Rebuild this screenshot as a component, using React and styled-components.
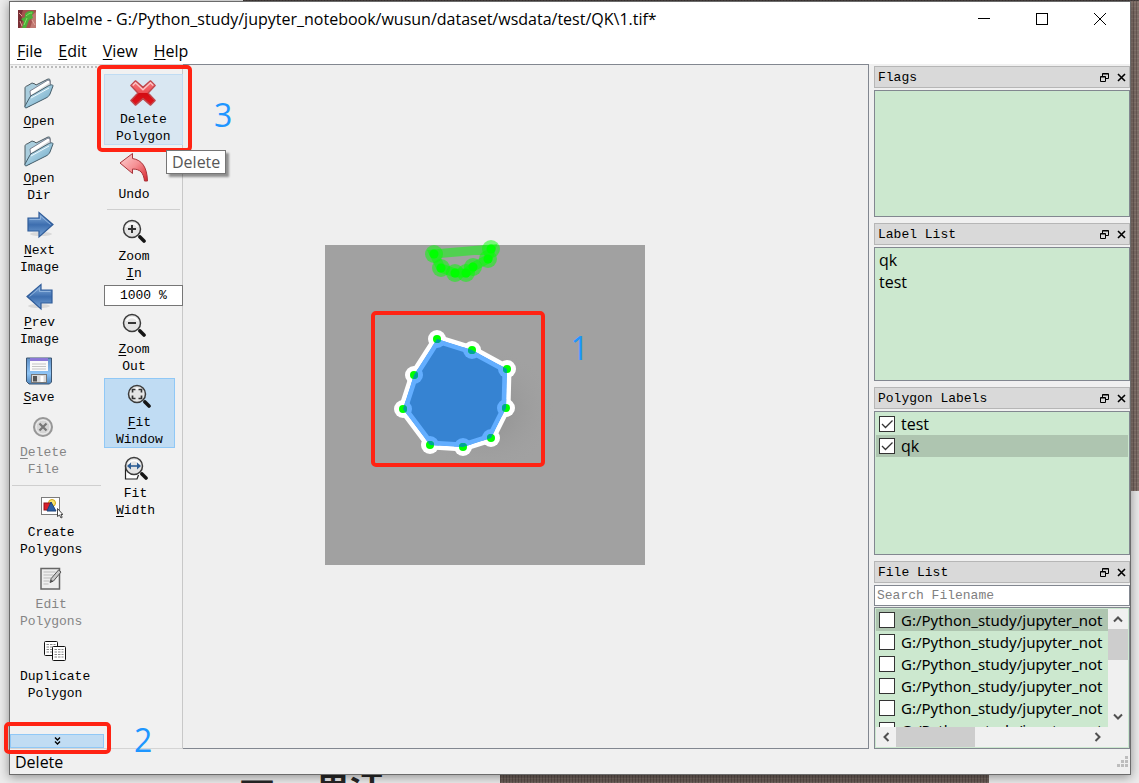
import {useState} from 'react';
import styled, {createGlobalStyle} from 'styled-components';

const GlobalStyle = createGlobalStyle`
  * {
    box-sizing: border-box;
  }

  body {
    margin: 0;
    font-family: 'Open Sans', 'Noto Sans', sans-serif;
    font-size: 16px;
    color: #000;
  }

  button,
  input {
    font: inherit;
    color: inherit;
    margin: 0;
    padding: 0;
    border: 0;
    background: none;
  }

  ul {
    margin: 0;
    padding: 0;
    list-style: none;
  }

  svg {
    display: block;
    flex: none;
  }
`;

const mono = `'Liberation Mono', monospace`;

const Desktop = styled.div`
  position: relative;
  min-height: 100vh;
  padding: 1px 8px 8px 9px;
  display: flex;
  overflow: hidden;
  background: #ececec;
`;

const Wallpaper = styled.div`
  position: absolute;
  background-color: #6a5d57;
  background-image: repeating-linear-gradient(
      90deg,
      rgba(30, 20, 20, 0.25) 0 1px,
      transparent 1px 3px
    ),
    repeating-linear-gradient(
      0deg,
      rgba(255, 240, 230, 0.08) 0 1px,
      transparent 1px 4px
    );
`;

const RightWallpaper = styled(Wallpaper)`
  top: 0;
  right: 0;
  width: 9px;
  height: 491px;
  background-color: #82716a;
`;

const BottomWallpaper = styled(Wallpaper)`
  left: 500px;
  right: 150px;
  bottom: 0;
  height: 9px;
`;

const TopWallpaper = styled(Wallpaper)`
  top: 0;
  left: 243px;
  right: 0;
  height: 1px;
  background-color: #3c3534;
`;

const PageHeading = styled.div`
  position: absolute;
  left: 240px;
  bottom: -16px;
  font: bold 34px/34px 'Noto Sans CJK SC', sans-serif;
  color: #262626;
  white-space: pre;
`;

const Window = styled.main`
  position: relative;
  flex: 1;
  min-width: 0;
  display: flex;
  flex-direction: column;
  border: 1px solid #6b6b6b;
  background: #f0f0f0;
  box-shadow: 0 2px 10px rgba(0, 0, 0, 0.4);
`;

const TitleBar = styled.header`
  height: 36px;
  padding: 0 1px 2px 8px;
  display: flex;
  align-items: center;
  background: #fff;
`;

const Title = styled.h1`
  flex: 1;
  margin: 0 0 0 7px;
  font-size: 16px;
  font-weight: 400;
  white-space: nowrap;
  overflow: hidden;
`;

const WindowButton = styled.button`
  width: 58px;
  height: 34px;
  display: grid;
  place-items: center;
`;

const MenuBar = styled.nav`
  height: 26px;
  padding-left: 7px;
  display: flex;
  align-items: center;
  gap: 16px;
  background: #fff;
`;

const Key = styled.span`
  text-decoration: underline;
  text-underline-offset: 2px;
  text-decoration-thickness: 1px;
`;

const Main = styled.div`
  flex: 1;
  display: flex;
  min-height: 0;
`;

const Toolbar = styled.aside`
  width: 173px;
  flex: none;
  display: flex;
  flex-direction: column;
  border-right: 1px solid #c8c8c8;
  border-top: 1px solid #d4d4d4;
  border-bottom: 1px solid #d4d4d4;
  background: #f1f1f1;
`;

const Grip = styled.div`
  height: 2px;
  margin: 1px 0 6px 1px;
  background: repeating-linear-gradient(90deg, #bcbcbc 0 2px, #f6f6f6 2px 4px);
`;

const ToolColumns = styled.div`
  flex: 1;
  display: grid;
  grid-template-columns: 94px 1fr;
`;

const ToolColumn = styled.div`
  display: flex;
  flex-direction: column;
  align-items: flex-start;
  gap: ${(props) => props.$gap}px;
`;

const ToolButton = styled.button`
  min-width: ${(props) => (props.$wide ? 60 : 50)}px;
  margin-left: ${(props) => (props.$wide ? 0 : 4)}px;
  padding: 0 ${(props) => (props.$wide ? 12 : 6)}px;
  font: 13px/17px ${mono};
  text-align: center;
  white-space: nowrap;
  color: ${(props) => (props.disabled ? '#858585' : '#000')};
  background: ${(props) => props.$fill || 'transparent'};
  outline: ${(props) => (props.$line ? `1px solid ${props.$line}` : 'none')};
  outline-offset: -1px;
`;

const IconSlot = styled.span`
  height: ${(props) => props.$height}px;
  display: flex;
  align-items: center;
  justify-content: center;
`;

const TextLine = styled.span`
  display: block;
`;

const Separator = styled.hr`
  width: ${(props) => (props.$wide ? 73 : 89)}px;
  height: 1px;
  margin: 3px 0 0 ${(props) => (props.$wide ? 3 : 2)}px;
  border: 0;
  background: #cfcfcf;
`;

const ZoomInput = styled.input`
  width: 100%;
  height: 21px;
  border: 1px solid #767676;
  background: #fff;
  text-align: center;
  font: 13px/17px ${mono};
`;

const MoreButton = styled.button`
  width: 94px;
  height: 14px;
  margin-top: auto;
  display: grid;
  place-items: center;
  border: 1px solid #90c8f6;
  background: #c0dcf3;
`;

const Canvas = styled.section`
  flex: 1;
  min-width: 0;
  padding: 0 82px 4px 0;
  display: flex;
  align-items: center;
  justify-content: center;
  border: 1px solid #828790;
  border-left: 0;
  background: #efefef;
`;

const Stage = styled.div`
  position: relative;
  width: 320px;
  height: 320px;
`;

const Docks = styled.aside`
  width: 261px;
  flex: none;
  padding: 2px 0 0 5px;
  display: flex;
  flex-direction: column;
  gap: 6px;
`;

const Dock = styled.section`
  flex: ${(props) => props.$grow} 1 0;
  min-height: 0;
  display: flex;
  flex-direction: column;
`;

const DockHeader = styled.header`
  height: 22px;
  margin-bottom: 2px;
  padding: 0 3px;
  display: flex;
  align-items: center;
  gap: 8px;
  border: 1px solid #b6b6b6;
  background: #d9d9d9;
`;

const DockTitle = styled.h2`
  flex: 1;
  margin: 0;
  font: 400 13px/17px ${mono};
`;

const DockBody = styled.div`
  flex: 1;
  min-height: 0;
  padding: 1px;
  border: 1px solid #828790;
  background: #cce8cf;
  overflow: hidden;
`;

const Item = styled.li`
  height: 22px;
  padding-left: 3px;
  line-height: 22px;
  white-space: nowrap;
  background: ${(props) => (props.$selected ? '#aec5b0' : 'transparent')};
`;

const CheckLabel = styled.label`
  display: flex;
  align-items: center;
  gap: 6px;
`;

const CheckBox = styled.input`
  appearance: none;
  width: 16px;
  height: 16px;
  flex: none;
  border: 1px solid #333;
  background: #fff;

  &:checked {
    background: #fff
      url("data:image/svg+xml,%3Csvg xmlns='http://www.w3.org/2000/svg' viewBox='0 0 14 14'%3E%3Cpath d='M2 7l3.5 3.5L12.5 3.5' fill='none' stroke='%23333' stroke-width='1.3'/%3E%3C/svg%3E");
  }
`;

const Search = styled.input`
  height: 21px;
  margin-bottom: 1px;
  padding-left: 2px;
  border: 1px solid #828790;
  background: #fff;
  font: 13px/17px ${mono};

  &::placeholder {
    color: #808080;
    opacity: 1;
  }
`;

const FileBody = styled(DockBody)`
  display: grid;
  grid-template: minmax(0, 1fr) 20px / minmax(0, 1fr) 20px;
`;

const FileItems = styled.ul`
  min-height: 0;
  overflow: hidden;
  font-family: 'Noto Sans', sans-serif;
  font-size: 15px;
`;

const ScrollBar = styled.div`
  display: flex;
  flex-direction: ${(props) => (props.$vertical ? 'column' : 'row')};
  background: #f0f0f0;
`;

const ScrollButton = styled.button`
  width: 20px;
  height: 20px;
  display: grid;
  place-items: center;
`;

const Track = styled.div`
  flex: 1;
  display: flex;
  flex-direction: ${(props) => (props.$vertical ? 'column' : 'row')};
`;

const Thumb = styled.div`
  flex: 0 0 ${(props) => props.$size};
  background: #cdcdcd;
`;

const Corner = styled.div`
  background: #f0f0f0;
`;

const StatusBar = styled.footer`
  height: 25px;
  padding: 0 2px 0 5px;
  display: flex;
  align-items: center;
  justify-content: space-between;
`;

const Tooltip = styled.div`
  position: absolute;
  left: 156px;
  top: 148px;
  padding: 0 5px;
  border: 1px solid #767676;
  background: #fff;
  box-shadow: 3px 3px 2px rgba(0, 0, 0, 0.4);
  line-height: 22px;
  color: #575757;
`;

const Mark = styled.div`
  position: absolute;
  border: 4px solid #ff2313;
  border-radius: 5px;
  pointer-events: none;
`;

const ToolMark = styled(Mark)`
  left: 87px;
  top: 63px;
  width: 95px;
  height: 87px;
`;

const MoreMark = styled(Mark)`
  left: -6px;
  bottom: 20px;
  width: 107px;
  height: 32px;
`;

const ShapeMark = styled(Mark)`
  left: 46px;
  top: 66px;
  width: 174px;
  height: 156px;
`;

const Digit = styled.span`
  position: absolute;
  font: 32px/32px 'Open Sans', sans-serif;
  color: #1e96ff;
`;

const ToolDigit = styled(Digit)`
  left: 204px;
  top: 97px;
`;

const MoreDigit = styled(Digit)`
  left: 124px;
  bottom: 18px;
`;

const ShapeDigit = styled(Digit)`
  left: 246px;
  top: 87px;
`;

const AppIcon = () => (
  <svg width="18" height="18" viewBox="0 0 18 18">
    <rect width="18" height="18" fill="#a5524f" />
    <path d="M0 0h5L3 6l2 4-3 8H0z" fill="#7a2f35" />
    <path d="M13 6l5-4v16h-6l2-6z" fill="#c07a72" />
    <path d="M1 3l3 3M14 10l3 5M2 11l2 5" stroke="#e2a59c" />
    <path
      d="M7 4c2-3 6-4 9-2l-2 3 1 3-4 2-3 8H4l2-6-3-3 4-2z"
      fill="#4caf3a"
    />
    <path d="M8 6c2-2 4-3 6-3M6 15l3-7" stroke="#8be065" fill="none" />
  </svg>
);

const FolderIcon = () => (
  <svg width="32" height="32" viewBox="0 0 32 32">
    <defs>
      <linearGradient id="folder" x1="0" y1="0" x2="1" y2="1">
        <stop offset="0" stopColor="#d3ebf5" />
        <stop offset="0.6" stopColor="#8fbfd6" />
        <stop offset="1" stopColor="#5a93b1" />
      </linearGradient>
    </defs>
    <path
      d="M2 29V10c0-1 1-2 2-2l5-3 3 1 1 1L25 1c1 0 2 0 2 1v6L7 28z"
      fill="#a9cddd"
      stroke="#4d5a61"
    />
    <path d="M7 13L25 2l2 1v8L8 22z" fill="#fff" stroke="#667" strokeWidth="0.8" />
    <path d="M8 17L26 5l1 6L9 20z" fill="#d8dadd" />
    <path
      d="M3 30c-1 0-1-1-1-2l5-9c1-2 3-2 6-4l12-7c2-1 5-2 5 0l-3 8c-1 2-2 3-4 4z"
      fill="url(#folder)"
      stroke="#455e6b"
    />
    <path d="M8 20l18-10" stroke="#effaff" />
  </svg>
);

const BlueArrowIcon = ({left}) => (
  <svg width="30" height="30" viewBox="0 0 30 30">
    <defs>
      <linearGradient id="blueArrow" x1="0" y1="0" x2="0" y2="1">
        <stop offset="0" stopColor="#8db4e0" />
        <stop offset="0.5" stopColor="#3d6eaf" />
        <stop offset="1" stopColor="#7aa6d8" />
      </linearGradient>
    </defs>
    <g transform={left ? 'matrix(-1 0 0 1 30 0)' : undefined}>
      <ellipse cx="16" cy="24" rx="11" ry="2" fill="#d9d9d9" />
      <path
        d="M3 8h11V2.500L28 14.500 14 27v-6H3z"
        fill="url(#blueArrow)"
        stroke="#2f5c99"
        strokeWidth="1.2"
      />
      <path d="M4.500 9.500h11V6l10 8.500" fill="none" stroke="#8fb3dd" />
    </g>
  </svg>
);

const SaveIcon = () => (
  <svg width="28" height="28" viewBox="0 0 28 28">
    <defs>
      <linearGradient id="disk" x1="0" y1="0" x2="0" y2="1">
        <stop offset="0" stopColor="#5f8fc6" />
        <stop offset="0.6" stopColor="#8ec4f5" />
        <stop offset="1" stopColor="#4f86bd" />
      </linearGradient>
    </defs>
    <path
      d="M1.500 1h25v24l-2 2H4l-2.500-2.500z"
      fill="url(#disk)"
      stroke="#3d5570"
    />
    <rect x="5" y="2" width="18" height="12" fill="#fafafa" />
    <rect x="5" y="1" width="18" height="3" fill="#8b78d6" />
    <path d="M7 7h14M7 9.500h14M7 12h14" stroke="#c4c4c4" />
    <rect x="6.500" y="17.500" width="15" height="8" fill="#d9d9d9" stroke="#777" />
    <rect x="8" y="19" width="4" height="5.500" fill="#555" />
    <path d="M17 19v6" stroke="#fff" strokeWidth="3" />
  </svg>
);

const DeleteFileIcon = () => (
  <svg width="22" height="22" viewBox="0 0 22 22">
    <circle cx="11" cy="11" r="9" fill="#d5d5d5" stroke="#979797" strokeWidth="2" />
    <circle cx="11" cy="11" r="7" fill="none" stroke="#f0f0f0" />
    <path d="M7.500 7.500l7 7M14.500 7.500l-7 7" stroke="#777" strokeWidth="2.200" />
  </svg>
);

const CreateIcon = () => (
  <svg width="24" height="24" viewBox="0 0 24 24">
    <rect
      x="2.500"
      y="2.500"
      width="18"
      height="17"
      fill="#fff"
      stroke="#000"
      strokeDasharray="1 1"
    />
    <circle cx="13" cy="8" r="3.500" fill="#f8e36b" stroke="#d1a71a" />
    <rect x="5" y="8" width="7" height="7" fill="#d81e2a" stroke="#941019" />
    <path d="M12 7l5 9H8z" fill="#2b5fa6" stroke="#1d4379" />
    <path
      d="M18.500 13.500v8l2-1.500 1.500 3 1.200-.7-1.300-2.800h2z"
      fill="#fff"
      stroke="#333"
      strokeWidth="0.9"
    />
  </svg>
);

const EditIcon = () => (
  <svg width="22" height="24" viewBox="0 0 22 24">
    <path d="M1 1.500h18.500v20.500H1z" fill="#eee" stroke="#666" strokeWidth="1.500" />
    <path d="M3.500 5h12M3.500 8h10M3.500 11h8M3.500 14h6M3.500 17h5" stroke="#bbb" />
    <path
      d="M10 15.500l1.200-4L18.500 3l2.500 2-7.500 9z"
      fill="#c9c9c9"
      stroke="#555"
    />
    <path d="M10 15.500l3-1.300-1.300-1.500z" fill="#444" />
  </svg>
);

const DuplicateIcon = () => (
  <svg width="24" height="22" viewBox="0 0 24 22">
    <rect x="1.500" y="1.500" width="13" height="14" rx="1" fill="#fff" stroke="#111" />
    <path
      d="M3.500 4.500h9M3.500 7h9M3.500 9.500h9M3.500 12h9"
      stroke="#888"
      strokeDasharray="2.500 1"
    />
    <rect x="9.500" y="6.500" width="13" height="14" rx="1" fill="#fff" stroke="#111" />
    <path
      d="M11.500 9.500h9M11.500 12h9M11.500 14.500h9M11.500 17h9"
      stroke="#888"
      strokeDasharray="2.500 1"
    />
  </svg>
);

const CrossIcon = () => (
  <svg width="28" height="28" viewBox="0 0 30 30">
    <defs>
      <linearGradient id="cross" x1="0" y1="0" x2="0" y2="1">
        <stop offset="0" stopColor="#f6797c" />
        <stop offset="0.48" stopColor="#ee5055" />
        <stop offset="0.52" stopColor="#d30b12" />
        <stop offset="1" stopColor="#e0161d" />
      </linearGradient>
    </defs>
    <path
      d="M7 2l8 7 8-7 5 5-7.500 8 7.500 8-5 5-8-7-8 7-5-5 7.500-8L2 7z"
      fill="url(#cross)"
      stroke="#c0484d"
      strokeWidth="1.500"
      strokeLinejoin="round"
    />
    <path
      d="M4 7l3-3 8 7.500L23 4l3 3"
      fill="none"
      stroke="#fcc4c5"
      strokeWidth="1.500"
    />
  </svg>
);

const UndoIcon = () => (
  <svg width="30" height="30" viewBox="0 0 30 30">
    <defs>
      <linearGradient id="undo" x1="0" y1="0" x2="1" y2="1">
        <stop offset="0" stopColor="#ffd3d3" />
        <stop offset="0.5" stopColor="#f59094" />
        <stop offset="1" stopColor="#d9232b" />
      </linearGradient>
    </defs>
    <path
      d="M1 11L13.500 1.500v5C23 8 28 15 28.500 29h-3c-1-8-4-12-12-12v4.500z"
      fill="url(#undo)"
      stroke="#a8343a"
    />
  </svg>
);

const MagnifierIcon = ({kind}) => (
  <svg width="24" height="24" viewBox="0 0 24 24">
    {kind === 'width' && (
      <path d="M1.500 9v14H13l1.500-4" fill="#fff" stroke="#222" strokeWidth="1.200" />
    )}
    <path d="M16.500 16.500l2 2" stroke="#777" strokeWidth="2" />
    <path
      d="M18 18l4 4"
      stroke="#151515"
      strokeWidth="3.600"
      strokeLinecap="round"
    />
    <circle cx="10" cy="10" r="8.500" fill="#e4e4e4" stroke="#3b3b3b" strokeWidth="1.500" />
    <path d="M4.500 8a6 6 0 0 1 11 0" fill="none" stroke="#fff" strokeWidth="1.500" />
    {kind === 'in' && (
      <path d="M10 6v8M6 10h8" stroke="#333" strokeWidth="2" />
    )}
    {kind === 'out' && <path d="M6 10h8" stroke="#333" strokeWidth="2" />}
    {kind === 'window' && (
      <path
        d="M5.500 8.500v-3h3M11.500 5.500h3v3M14.500 11.500v3h-3M8.500 14.500h-3v-3"
        fill="none"
        stroke="#333"
        strokeWidth="1.700"
      />
    )}
    {kind === 'width' && (
      <g fill="#2f5f96">
        <path d="M3 10l4-3.500v7zM17 10l-4-3.500v7z" />
        <path d="M6 9.200h8v1.600H6z" />
      </g>
    )}
  </svg>
);

const ChevronIcon = ({turn = 0}) => (
  <svg width="12" height="12" viewBox="0 0 12 12">
    <path
      d="M2 8.500l4-4 4 4"
      fill="none"
      stroke="#505050"
      strokeWidth="2"
      transform={`rotate(${turn} 6 6)`}
    />
  </svg>
);

const FloatIcon = () => (
  <svg width="9" height="9" viewBox="0 0 9 9" fill="none" stroke="#000">
    <path d="M2.500 3V.5h6v5H6M2.500 1h6" />
    <path d="M.5 3.500h5v5h-5zM.5 4h5" />
  </svg>
);

const CloseIcon = () => (
  <svg width="9" height="9" viewBox="0 0 9 9">
    <path d="M1 1l7 7M8 1L1 8" stroke="#000" strokeWidth="1.600" />
  </svg>
);

const greenPoints = [
  [109, 9],
  [116, 23],
  [130, 28],
  [141, 28],
  [148, 22],
  [163, 14],
  [166, 4],
];

const shapePoints = [
  [112, 94],
  [147, 105],
  [182, 124],
  [181, 163],
  [166, 193],
  [138, 202],
  [105, 200],
  [78, 164],
  [89, 130],
];

const toPoints = (list) => list.map((p) => p.join(',')).join(' ');

const Drawing = () => (
  <svg width="320" height="320" viewBox="0 0 320 320" overflow="visible">
    <defs>
      <clipPath id="inside">
        <polygon points={toPoints(shapePoints)} />
      </clipPath>
      <radialGradient id="shade">
        <stop offset="0" stopColor="#8c8c8c" />
        <stop offset="1" stopColor="#a0a0a0" stopOpacity="0" />
      </radialGradient>
    </defs>
    <rect width="320" height="320" fill="#a1a1a1" />
    <ellipse cx="160" cy="165" rx="70" ry="62" fill="url(#shade)" />

    <polygon
      points={toPoints(greenPoints)}
      fill="none"
      stroke="#00ff00"
      strokeOpacity="0.5"
      strokeWidth="9"
    />
    {greenPoints.map(([x, y]) => (
      <g key={`${x}-${y}`} fill="#00ff00">
        <circle cx={x} cy={y} r="9" fillOpacity="0.5" />
        <circle cx={x} cy={y} r="4.500" />
      </g>
    ))}

    <polygon
      points={toPoints(shapePoints)}
      fill="#3a86d4"
      stroke="#fff"
      strokeWidth="9"
    />
    {shapePoints.map(([x, y]) => (
      <circle key={`halo-${x}`} cx={x} cy={y} r="9" fill="#fff" />
    ))}
    <g clipPath="url(#inside)">
      <polygon
        points={toPoints(shapePoints)}
        fill="#3683d2"
        stroke="#63aeff"
        strokeWidth="9"
      />
      {shapePoints.map(([x, y]) => (
        <circle key={`inner-${x}`} cx={x} cy={y} r="9" fill="#63aeff" />
      ))}
    </g>
    {shapePoints.map(([x, y]) => (
      <circle key={`dot-${x}`} cx={x} cy={y} r="4" fill="#00ff00" />
    ))}
    <g clipPath="url(#inside)">
      {shapePoints.map(([x, y]) => (
        <circle key={`in-${x}`} cx={x} cy={y} r="4" fill="#00a19b" />
      ))}
    </g>
  </svg>
);

// "_" in front of a letter marks it as the keyboard mnemonic
const Mnemonic = ({text}) => {
  const at = text.indexOf('_');
  if (at < 0) return text;
  return (
    <>
      {text.slice(0, at)}
      <Key>{text[at + 1]}</Key>
      {text.slice(at + 2)}
    </>
  );
};

const Tool = ({icon, lines, slot = 34, ...rest}) => (
  <ToolButton type="button" {...rest}>
    <IconSlot $height={slot}>{icon}</IconSlot>
    {lines.map((line) => (
      <TextLine key={line}>
        <Mnemonic text={line} />
      </TextLine>
    ))}
  </ToolButton>
);

const DockPanel = ({title, grow, children}) => (
  <Dock $grow={grow}>
    <DockHeader>
      <DockTitle>{title}</DockTitle>
      <button type="button" aria-label={`Float ${title}`}>
        <FloatIcon />
      </button>
      <button type="button" aria-label={`Close ${title}`}>
        <CloseIcon />
      </button>
    </DockHeader>
    {children}
  </Dock>
);

const menus = ['_File', '_Edit', '_View', '_Help'];
const labels = ['qk', 'test'];
const polygons = ['test', 'qk'];
const files = [0, 1, 2, 3, 4, 5];

const App = () => {
  const [zoom, setZoom] = useState('1000 %');

  return (
    <Desktop>
      <GlobalStyle />
      <RightWallpaper />
      <BottomWallpaper />
      <TopWallpaper />
      <PageHeading>一、 里注</PageHeading>
      <Window>
        <TitleBar>
          <AppIcon />
          <Title>
            labelme - G:/Python_study/jupyter_notebook/wusun/dataset/wsdata/test/QK\1.tif*
          </Title>
          <WindowButton type="button" aria-label="Minimize">
            <svg width="12" height="12">
              <path d="M0 5.500h12" stroke="#000" />
            </svg>
          </WindowButton>
          <WindowButton type="button" aria-label="Maximize">
            <svg width="12" height="12">
              <rect x=".5" y=".5" width="11" height="11" fill="none" stroke="#000" />
            </svg>
          </WindowButton>
          <WindowButton type="button" aria-label="Close">
            <svg width="12" height="12">
              <path d="M0 0l12 12M12 0L0 12" stroke="#000" />
            </svg>
          </WindowButton>
        </TitleBar>
        <MenuBar>
          {menus.map((menu) => (
            <button type="button" key={menu}>
              <Mnemonic text={menu} />
            </button>
          ))}
        </MenuBar>

        <Main>
          <Toolbar>
            <Grip />
            <ToolColumns>
              <ToolColumn $gap={4}>
                <Tool icon={<FolderIcon />} lines={['_Open']} slot={39} />
                <Tool icon={<FolderIcon />} lines={['_Open', 'Dir']} slot={36} />
                <Tool icon={<BlueArrowIcon />} lines={['_Next', 'Image']} />
                <Tool icon={<BlueArrowIcon left />} lines={['_Prev', 'Image']} />
                <Tool icon={<SaveIcon />} lines={['_Save']} slot={37} />
                <Tool icon={<DeleteFileIcon />} lines={['_Delete', 'File']} disabled />
                <Separator />
                <Tool icon={<CreateIcon />} lines={['Create', 'Polygons']} />
                <Tool icon={<EditIcon />} lines={['Edit', 'Polygons']} disabled />
                <Tool icon={<DuplicateIcon />} lines={['Duplicate', 'Polygon']} />
                <MoreButton type="button" aria-label="More tools">
                  <svg width="7" height="8" viewBox="0 0 7 8">
                    <path
                      d="M1 .5L3.500 3 6 .5M1 4.500L3.500 7 6 4.500"
                      fill="none"
                      stroke="#000"
                      strokeWidth="1.400"
                    />
                  </svg>
                </MoreButton>
              </ToolColumn>
              <ToolColumn $gap={3}>
                <Tool
                  $wide
                  $fill="#d9e7f2"
                  $line="#c0dcf3"
                  icon={<CrossIcon />}
                  lines={['Delete', 'Polygon']}
                  slot={37}
                />
                <Tool $wide icon={<UndoIcon />} lines={['Undo']} slot={38} />
                <Separator $wide />
                <Tool
                  $wide
                  icon={<MagnifierIcon kind="in" />}
                  lines={['Zoom', '_In']}
                  slot={35}
                />
                <ZoomInput
                  aria-label="Zoom level"
                  value={zoom}
                  onChange={(e) => setZoom(e.target.value)}
                />
                <Tool
                  $wide
                  icon={<MagnifierIcon kind="out" />}
                  lines={['_Zoom', 'Out']}
                  slot={32}
                />
                <Tool
                  $wide
                  $fill="#c0dcf3"
                  $line="#90c8f6"
                  icon={<MagnifierIcon kind="window" />}
                  lines={['_Fit', 'Window']}
                  slot={36}
                />
                <Tool
                  $wide
                  icon={<MagnifierIcon kind="width" />}
                  lines={['Fit', '_Width']}
                />
              </ToolColumn>
            </ToolColumns>
          </Toolbar>

          <Canvas>
            <Stage>
              <Drawing />
              <ShapeMark />
              <ShapeDigit>1</ShapeDigit>
            </Stage>
          </Canvas>

          <Docks>
            <DockPanel title="Flags" grow={151}>
              <DockBody />
            </DockPanel>
            <DockPanel title="Label List" grow={158}>
              <DockBody>
                <ul>
                  {labels.map((label) => (
                    <Item key={label}>{label}</Item>
                  ))}
                </ul>
              </DockBody>
            </DockPanel>
            <DockPanel title="Polygon Labels" grow={168}>
              <DockBody>
                <ul>
                  {polygons.map((label) => (
                    <Item key={label} $selected={label === 'qk'}>
                      <CheckLabel>
                        <CheckBox type="checkbox" defaultChecked />
                        {label}
                      </CheckLabel>
                    </Item>
                  ))}
                </ul>
              </DockBody>
            </DockPanel>
            <DockPanel title="File List" grow={188}>
              <Search placeholder="Search Filename" aria-label="Search Filename" />
              <FileBody>
                <FileItems>
                  {files.map((file) => (
                    <Item key={file} $selected={file === 0}>
                      <CheckLabel>
                        <CheckBox type="checkbox" />
                        G:/Python_study/jupyter_not
                      </CheckLabel>
                    </Item>
                  ))}
                </FileItems>
                <ScrollBar $vertical>
                  <ScrollButton type="button" aria-label="Scroll up">
                    <ChevronIcon />
                  </ScrollButton>
                  <Track $vertical>
                    <Thumb $size="40%" />
                  </Track>
                  <ScrollButton type="button" aria-label="Scroll down">
                    <ChevronIcon turn={180} />
                  </ScrollButton>
                </ScrollBar>
                <ScrollBar>
                  <ScrollButton type="button" aria-label="Scroll left">
                    <ChevronIcon turn={-90} />
                  </ScrollButton>
                  <Track>
                    <Thumb $size="41%" />
                  </Track>
                  <ScrollButton type="button" aria-label="Scroll right">
                    <ChevronIcon turn={90} />
                  </ScrollButton>
                </ScrollBar>
                <Corner />
              </FileBody>
            </DockPanel>
          </Docks>
        </Main>

        <StatusBar>
          Delete
          <svg width="11" height="11" fill="#bdbdbd">
            <path d="M8 0h3v3H8zM4 4h3v3H4zM8 4h3v3H8zM0 8h3v3H0zM4 8h3v3H4zM8 8h3v3H8z" />
          </svg>
        </StatusBar>

        <ToolMark />
        <ToolDigit>3</ToolDigit>
        <MoreMark />
        <MoreDigit>2</MoreDigit>
        <Tooltip role="tooltip">Delete</Tooltip>
      </Window>
    </Desktop>
  );
};

export default App;
